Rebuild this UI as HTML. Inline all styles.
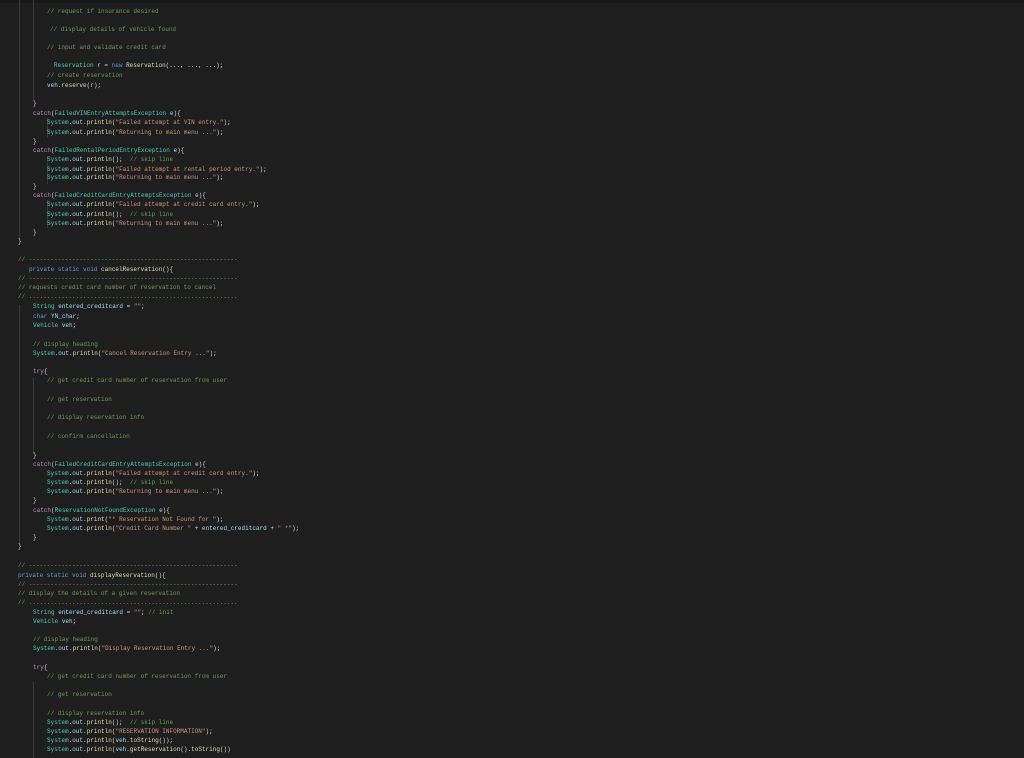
<!DOCTYPE html>
<html><head><meta charset="utf-8"><style>
html,body{margin:0;padding:0;background:#1e1e1e;width:1024px;height:758px;overflow:hidden}
body{position:relative;font-family:"Liberation Mono",monospace;font-size:6px;color:#d4d4d4}
.l{position:absolute;white-space:pre;line-height:8px;height:8px}
.c{color:#6a9955}.k{color:#569cd6}.p{color:#c586c0}.t{color:#4ec9b0}.s{color:#ce9178}.v{color:#9cdcfe}.f{color:#dcdcaa}
.g{position:absolute;width:1px;background:#3a3a3a}
.top{position:absolute;left:0;top:0;width:1024px;height:3px;background:#181818}
</style></head><body>
<div class="top"></div>
<div class="g" style="left:19px;top:0;height:240px"></div>
<div class="g" style="left:33px;top:0;height:100px"></div>
<div class="g" style="left:47px;top:118px;height:20px"></div>
<div class="g" style="left:47px;top:156px;height:28px"></div>
<div class="g" style="left:47px;top:200px;height:28px"></div>
<div class="g" style="left:33px;top:378px;height:76px"></div>
<div class="g" style="left:33px;top:682px;height:76px"></div>
<div class="g" style="left:19px;top:305px;height:240px"></div>

<div class="l c" style="top:8px;left:47px">// request if insurance desired</div>
<div class="l c" style="top:26px;left:50px">// display details of vehicle found</div>
<div class="l c" style="top:44px;left:47px">// input and validate credit card</div>
<div class="l" style="top:62px;left:54px"><span class="t">Reservation</span> <span class="v">r</span> = <span class="k">new</span> <span class="f">Reservation</span>(..., ..., ...);</div>
<div class="l c" style="top:72px;left:47px">// create reservation</div>
<div class="l" style="top:82px;left:47px"><span class="v">veh</span>.<span class="f">reserve</span>(<span class="v">r</span>);</div>
<div class="l" style="top:100px;left:33px">}</div>
<div class="l" style="top:110px;left:33px"><span class="p">catch</span>(<span class="t">FailedVINEntryAttemptsException</span> <span class="v">e</span>){</div>
<div class="l" style="top:119px;left:47px"><span class="t">System</span>.<span class="v">out</span>.<span class="f">println</span>(<span class="s">"Failed attempt at VIN entry."</span>);</div>
<div class="l" style="top:129px;left:47px"><span class="t">System</span>.<span class="v">out</span>.<span class="f">println</span>(<span class="s">"Returning to main menu ..."</span>);</div>
<div class="l" style="top:138px;left:33px">}</div>
<div class="l" style="top:147px;left:33px"><span class="p">catch</span>(<span class="t">FailedRentalPeriodEntryException</span> <span class="v">e</span>){</div>
<div class="l" style="top:156px;left:47px"><span class="t">System</span>.<span class="v">out</span>.<span class="f">println</span>();  <span class="c">// skip line</span></div>
<div class="l" style="top:166px;left:47px"><span class="t">System</span>.<span class="v">out</span>.<span class="f">println</span>(<span class="s">"Failed attempt at rental period entry."</span>);</div>
<div class="l" style="top:174px;left:47px"><span class="t">System</span>.<span class="v">out</span>.<span class="f">println</span>(<span class="s">"Returning to main menu ..."</span>);</div>
<div class="l" style="top:183px;left:33px">}</div>
<div class="l" style="top:192px;left:33px"><span class="p">catch</span>(<span class="t">FailedCreditCardEntryAttemptsException</span> <span class="v">e</span>){</div>
<div class="l" style="top:201px;left:47px"><span class="t">System</span>.<span class="v">out</span>.<span class="f">println</span>(<span class="s">"Failed attempt at credit card entry."</span>);</div>
<div class="l" style="top:211px;left:47px"><span class="t">System</span>.<span class="v">out</span>.<span class="f">println</span>();  <span class="c">// skip line</span></div>
<div class="l" style="top:220px;left:47px"><span class="t">System</span>.<span class="v">out</span>.<span class="f">println</span>(<span class="s">"Returning to main menu ..."</span>);</div>
<div class="l" style="top:229px;left:33px">}</div>
<div class="l" style="top:238px;left:18px">}</div>

<div class="l c" style="top:256px;left:18px">// ----------------------------------------------------------</div>
<div class="l" style="top:266px;left:29px"><span class="k">private static void</span> <span class="f">cancelReservation</span>(){</div>
<div class="l c" style="top:275px;left:18px">// ----------------------------------------------------------</div>
<div class="l c" style="top:284px;left:18px">// requests credit card number of reservation to cancel</div>
<div class="l c" style="top:293px;left:18px">// ..........................................................</div>
<div class="l" style="top:303px;left:33px"><span class="t">String</span> <span class="v">entered_creditcard</span> = <span class="s">""</span>;</div>
<div class="l" style="top:313px;left:33px"><span class="k">char</span> <span class="v">YN_char</span>;</div>
<div class="l" style="top:322px;left:33px"><span class="t">Vehicle</span> <span class="v">veh</span>;</div>
<div class="l c" style="top:341px;left:33px">// display heading</div>
<div class="l" style="top:350px;left:33px"><span class="t">System</span>.<span class="v">out</span>.<span class="f">println</span>(<span class="s">"Cancel Reservation Entry ..."</span>);</div>
<div class="l" style="top:368px;left:33px"><span class="p">try</span>{</div>
<div class="l c" style="top:377px;left:47px">// get credit card number of reservation from user</div>
<div class="l c" style="top:396px;left:47px">// get reservation</div>
<div class="l c" style="top:414px;left:47px">// display reservation info</div>
<div class="l c" style="top:433px;left:47px">// confirm cancellation</div>
<div class="l" style="top:452px;left:33px">}</div>
<div class="l" style="top:461px;left:33px"><span class="p">catch</span>(<span class="t">FailedCreditCardEntryAttemptsException</span> <span class="v">e</span>){</div>
<div class="l" style="top:470px;left:47px"><span class="t">System</span>.<span class="v">out</span>.<span class="f">println</span>(<span class="s">"Failed attempt at credit card entry."</span>);</div>
<div class="l" style="top:479px;left:47px"><span class="t">System</span>.<span class="v">out</span>.<span class="f">println</span>();  <span class="c">// skip line</span></div>
<div class="l" style="top:488px;left:47px"><span class="t">System</span>.<span class="v">out</span>.<span class="f">println</span>(<span class="s">"Returning to main menu ..."</span>);</div>
<div class="l" style="top:497px;left:33px">}</div>
<div class="l" style="top:507px;left:33px"><span class="p">catch</span>(<span class="t">ReservationNotFoundException</span> <span class="v">e</span>){</div>
<div class="l" style="top:516px;left:47px"><span class="t">System</span>.<span class="v">out</span>.<span class="f">print</span>(<span class="s">"* Reservation Not Found for "</span>);</div>
<div class="l" style="top:525px;left:47px"><span class="t">System</span>.<span class="v">out</span>.<span class="f">println</span>(<span class="s">"Credit Card Number "</span> + <span class="v">entered_creditcard</span> + <span class="s">" *"</span>);</div>
<div class="l" style="top:534px;left:33px">}</div>
<div class="l" style="top:543px;left:18px">}</div>

<div class="l c" style="top:562px;left:18px">// ----------------------------------------------------------</div>
<div class="l" style="top:572px;left:18px"><span class="k">private static void</span> <span class="f">displayReservation</span>(){</div>
<div class="l c" style="top:581px;left:18px">// ----------------------------------------------------------</div>
<div class="l c" style="top:590px;left:18px">// display the details of a given reservation</div>
<div class="l c" style="top:599px;left:18px">// ..........................................................</div>
<div class="l" style="top:609px;left:33px"><span class="t">String</span> <span class="v">entered_creditcard</span> = <span class="s">""</span>; <span class="c">// init</span></div>
<div class="l" style="top:618px;left:33px"><span class="t">Vehicle</span> <span class="v">veh</span>;</div>
<div class="l c" style="top:636px;left:33px">// display heading</div>
<div class="l" style="top:645px;left:33px"><span class="t">System</span>.<span class="v">out</span>.<span class="f">println</span>(<span class="s">"Display Reservation Entry ..."</span>);</div>
<div class="l" style="top:664px;left:33px"><span class="p">try</span>{</div>
<div class="l c" style="top:673px;left:47px">// get credit card number of reservation from user</div>
<div class="l c" style="top:691px;left:47px">// get reservation</div>
<div class="l c" style="top:710px;left:47px">// display reservation info</div>
<div class="l" style="top:719px;left:47px"><span class="t">System</span>.<span class="v">out</span>.<span class="f">println</span>();  <span class="c">// skip line</span></div>
<div class="l" style="top:728px;left:47px"><span class="t">System</span>.<span class="v">out</span>.<span class="f">println</span>(<span class="s">"RESERVATION INFORMATION"</span>);</div>
<div class="l" style="top:737px;left:47px"><span class="t">System</span>.<span class="v">out</span>.<span class="f">println</span>(<span class="v">veh</span>.<span class="f">toString</span>());</div>
<div class="l" style="top:746px;left:47px"><span class="t">System</span>.<span class="v">out</span>.<span class="f">println</span>(<span class="v">veh</span>.<span class="f">getReservation</span>().<span class="f">toString</span>())</div>
</body></html>
